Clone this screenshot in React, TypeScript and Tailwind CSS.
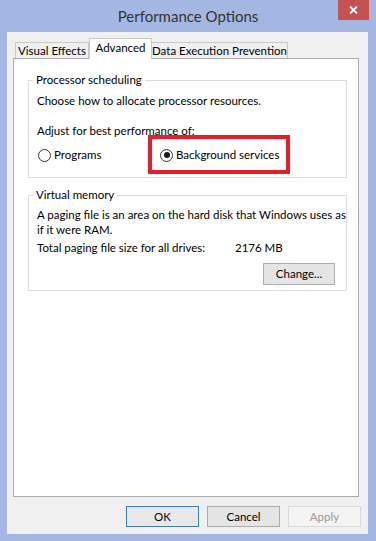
import type { ReactNode } from 'react';

const font = { fontFamily: 'Lato, "Noto Sans", sans-serif' };

function Radio({ checked, label }: { checked?: boolean; label: string }) {
  return (
    <span className="flex items-center gap-[3px]">
      <span className="flex h-[13px] w-[13px] items-center justify-center rounded-full border border-[#333333] bg-white">
        {checked && <span className="h-[6px] w-[6px] rounded-full bg-[#1a1a1a]" />}
      </span>
      <span>{label}</span>
    </span>
  );
}

function Group({ title, children, className }: { title: string; children: ReactNode; className?: string }) {
  return (
    <fieldset className={`min-w-0 border border-[#dcdcdc] ${className ?? ''}`}>
      <legend className="-ml-[4px] px-[3px] leading-[16px]">{title}</legend>
      {children}
    </fieldset>
  );
}

function Button({ children, primary, disabled }: { children: ReactNode; primary?: boolean; disabled?: boolean }) {
  return (
    <button
      className={`flex h-[21px] w-[73px] items-center justify-center border ${
        primary
          ? 'border-[#3c7fb1] bg-[#e8e8e8] text-black'
          : disabled
            ? 'border-[#dadada] bg-[#f4f4f4] text-[#9a9a9a]'
            : 'border-[#acacac] bg-[#e5e5e5] text-black'
      }`}
    >
      {children}
    </button>
  );
}

export default function App() {
  return (
    <div className="flex h-[541px] w-[376px] flex-col whitespace-nowrap bg-[#a4b7e2] text-[11.5px] text-black" style={font}>
      {/* Title bar */}
      <div className="relative flex h-[32px] shrink-0 items-center justify-center">
        <span className="text-[15px] text-[#333333]">Performance Options</span>
        <span className="absolute right-[7px] top-0 flex h-[20px] w-[31px] items-center justify-center bg-[#c75050]">
          <svg width="9" height="8" viewBox="0 0 9 8">
            <path d="M1 0.5 L8 7.5 M8 0.5 L1 7.5" stroke="white" strokeWidth="1.8" />
          </svg>
        </span>
      </div>

      {/* Client area */}
      <div className="ml-[7px] mr-[8px] flex flex-1 flex-col bg-[#f0f0f0] pl-[6px] pr-[9px] pt-[6px]">
        {/* Tabs */}
        <div className="relative z-10 flex h-[20px] items-end pl-[2px]">
          <div className="flex h-[16px] w-[74px] items-center justify-center border border-b-0 border-[#c9c9c9] bg-[#f0f0f0]">
            Visual Effects
          </div>
          <div className="-mb-px flex h-[21px] w-[63px] items-start justify-center border border-b-0 border-[#c9c9c9] bg-white">
            Advanced
          </div>
          <div className="flex h-[16px] w-[136px] items-center justify-center border border-b-0 border-l-0 border-[#c9c9c9] bg-[#f0f0f0]">
            Data Execution Prevention
          </div>
        </div>

        {/* Tab panel */}
        <div className="flex h-[439px] flex-col border border-[#adadad] bg-white pl-[14px] pr-[11px] pt-[13px]">
          <Group title="Processor scheduling" className="pb-[14px] pl-[8px]">
            <div className="mt-[5px] leading-[16px]">Choose how to allocate processor resources.</div>
            <div className="mt-[14px] leading-[16px]">Adjust for best performance of:</div>
            <div className="mt-[8px] flex leading-[16px]">
              <div className="w-[123px] pl-[1px]">
                <Radio label="Programs" />
              </div>
              <div className="relative">
                <Radio checked label="Background services" />
                <span className="absolute -left-[12px] -right-[11px] -top-[12px] -bottom-[11px] border-[4px] border-[#e2202c]" />
              </div>
            </div>
          </Group>

          <Group title="Virtual memory" className="mt-[9px] pb-[5px] pl-[8px]">
            <div className="mt-[4px] leading-[15px]">
              <div>A paging file is an area on the hard disk that Windows uses as</div>
              <div>if it were RAM.</div>
            </div>
            <div className="mt-[3px] flex leading-[16px]">
              <span className="w-[198px]">Total paging file size for all drives:</span>
              <span>2176 MB</span>
            </div>
            <div className="mr-[11px] mt-[7px] flex justify-end">
              <button className="flex h-[22px] w-[72px] items-center justify-center border border-[#acacac] bg-[#e5e5e5]">
                Change...
              </button>
            </div>
          </Group>
        </div>

        {/* Dialog buttons */}
        <div className="mr-[-2px] mt-[9px] flex justify-end gap-[8px]">
          <Button primary>OK</Button>
          <Button>Cancel</Button>
          <Button disabled>Apply</Button>
        </div>
      </div>
      <div className="h-[7px] shrink-0" />
    </div>
  );
}
